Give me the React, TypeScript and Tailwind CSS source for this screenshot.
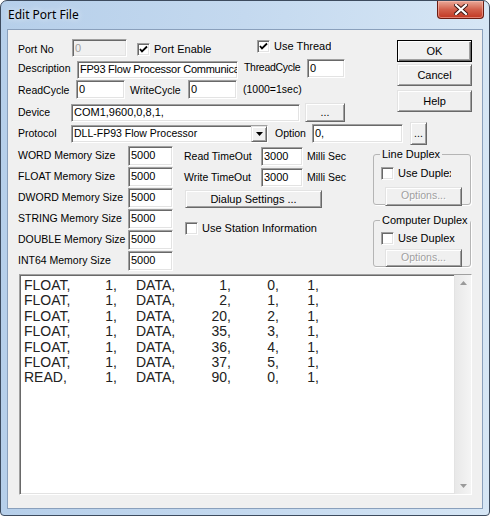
import React from 'react';

const ui = "font-['Liberation_Sans',Arial,sans-serif] text-[10.5px] text-black whitespace-nowrap";

const sunken =
  'border border-t-[#a0a0a0] border-l-[#a0a0a0] border-b-white border-r-white shadow-[inset_1px_1px_0_#696969,inset_-1px_-1px_0_#e3e3e3]';
const raised =
  'border border-t-[#e3e3e3] border-l-[#e3e3e3] border-b-[#696969] border-r-[#696969] shadow-[inset_1px_1px_0_#fff,inset_-1px_-1px_0_#a0a0a0] bg-[#f0f0f0]';

function Field({ className, children, disabled }: { className: string; children?: React.ReactNode; disabled?: boolean }) {
  return (
    <div
      className={`${sunken} ${className} flex items-center pl-[2px] overflow-hidden whitespace-nowrap text-[11px] ${
        disabled ? 'bg-[#f0f0f0] text-[#a0a0a0]' : 'bg-white'
      }`}
    >
      {children}
    </div>
  );
}

function Button({ className, children, disabled, def }: { className: string; children: React.ReactNode; disabled?: boolean; def?: boolean }) {
  const look = def
    ? 'border border-black shadow-[inset_1px_1px_0_#fff,inset_-1px_-1px_0_#696969,inset_-2px_-2px_0_#a0a0a0] bg-[#f0f0f0]'
    : raised;
  return (
    <div
      className={`${look} ${className} flex items-center justify-center whitespace-nowrap ${
        disabled ? 'text-[#a0a0a0] [text-shadow:1px_1px_0_#fff]' : ''
      }`}
    >
      {children}
    </div>
  );
}

function Check({ label, checked, className }: { label: string; checked?: boolean; className?: string }) {
  return (
    <div className={`flex items-center whitespace-nowrap overflow-hidden ${className ?? ''}`}>
      <div className={`${sunken} w-[13px] h-[13px] bg-white shrink-0 flex items-center justify-center`}>
        {checked && (
          <svg width="9" height="9" viewBox="0 0 9 9">
            <path d="M1 4 L3 6.5 L8 1.5" fill="none" stroke="#000" strokeWidth="1.8" />
          </svg>
        )}
      </div>
      <span className="ml-[4px] text-[11px]">{label}</span>
    </div>
  );
}

function Group({ title, className, children }: { title: string; className: string; children: React.ReactNode }) {
  return (
    <fieldset className={`border border-[#b5b5b5] rounded-[3px] shadow-[1px_1px_0_#fff] ${className}`}>
      <legend className="ml-[6px] px-[2px] leading-[13px] text-[11px]">{title}</legend>
      {children}
    </fieldset>
  );
}

const rows: [string, string, string, string, string, string][] = [
  ['FLOAT,', '1,', 'DATA,', '1,', '0,', '1,'],
  ['FLOAT,', '1,', 'DATA,', '2,', '1,', '1,'],
  ['FLOAT,', '1,', 'DATA,', '20,', '2,', '1,'],
  ['FLOAT,', '1,', 'DATA,', '35,', '3,', '1,'],
  ['FLOAT,', '1,', 'DATA,', '36,', '4,', '1,'],
  ['FLOAT,', '1,', 'DATA,', '37,', '5,', '1,'],
  ['READ,', '1,', 'DATA,', '90,', '0,', '1,'],
];

const memory = ['WORD', 'FLOAT', 'DWORD', 'STRING', 'DOUBLE', 'INT64'];

export default function App() {
  return (
    <div className="w-[490px] h-[516px] rounded-t-[7px] rounded-b-[4px] border border-[#3d4b5e] bg-gradient-to-r from-[#b6cfea] via-[#c4d9ef] to-[#d6e6f5] overflow-hidden">
      {/* Title bar */}
      <div className="h-[29px] flex items-start">
        <span className="pl-[7px] pt-[5px] font-['Noto_Sans',sans-serif] text-[12px] text-black [text-shadow:0_0_6px_#fff]">
          Edit Port File
        </span>
        <div className="ml-auto mr-[5px] w-[47px] h-[18px] rounded-b-[4px] border border-t-0 border-[#6b1c12] bg-gradient-to-b from-[#e9a898] via-[#d2604c] to-[#c1351f] shadow-[inset_0_0_0_1px_rgba(255,200,190,0.5)] flex items-center justify-center">
          <svg width="14" height="11" viewBox="0 0 14 11">
            <path d="M2 1 L12 10 M12 1 L2 10" stroke="#3a1410" strokeWidth="4" strokeLinecap="square" />
            <path d="M2 1 L12 10 M12 1 L2 10" stroke="#fff" strokeWidth="2.2" strokeLinecap="square" />
          </svg>
        </div>
      </div>

      {/* Client area */}
      <div className={`${ui} mx-[7px] w-[474px] h-[478px] bg-[#f0f0f0] shadow-[0_0_0_1px_#8aa0bc] pl-[10px]`}>
        {/* Top block */}
        <div className="flex">
          <div className="w-[379px]">
            <div className="mt-[8px] h-[20px] flex items-center">
              <span className="w-[54px] pt-[4px]">Port No</span>
              <Field className="w-[55px] h-[18px]" disabled>0</Field>
              <Check label="Port Enable" checked className="ml-[10px] w-[120px] pt-[2px]" />
              <Check label="Use Thread" checked className="mb-[4px]" />
            </div>
            <div className="h-[20px] flex items-center">
              <span className="w-[59px] pt-[2px]">Description</span>
              <Field className="w-[161px] h-[18px] mt-[3px] tracking-[-0.25px]">FP93 Flow Processor Communica</Field>
              <span className="ml-[6px] w-[63px] tracking-[-0.3px]">ThreadCycle</span>
              <Field className="w-[38px] h-[19px]">0</Field>
            </div>
            <div className="mt-[2px] h-[19px] flex items-center">
              <span className="w-[58px] pt-[2px]">ReadCycle</span>
              <Field className="w-[49px] h-[19px]">0</Field>
              <span className="ml-[5px] w-[58px] pt-[2px]">WriteCycle</span>
              <Field className="w-[49px] h-[19px]">0</Field>
              <span className="ml-[6px]">(1000=1sec)</span>
            </div>
            <div className="mt-[4px] h-[19px] flex items-center">
              <span className="w-[53px]">Device</span>
              <Field className="w-[229px] h-[18px]">COM1,9600,0,8,1,</Field>
              <Button className="ml-[5px] w-[40px] h-[19px]">...</Button>
            </div>
          </div>
          <div className="w-[75px]">
            <Button def className="mt-[10px] h-[22px] text-[11px]">OK</Button>
            <Button className="mt-[2px] h-[22px] text-[11px]">Cancel</Button>
            <Button className="mt-[4px] h-[22px] text-[11px]">Help</Button>
          </div>
        </div>

        {/* Protocol row */}
        <div className="h-[23px] flex items-center">
          <span className="w-[53px]">Protocol</span>
          <div className={`${sunken} bg-white w-[197px] h-[18px] flex items-center`}>
            <span className="flex-1 pl-[2px] whitespace-nowrap">DLL-FP93 Flow Processor</span>
            <div className={`${raised} w-[16px] h-[16px] flex items-center justify-center`}>
              <svg width="7" height="4" viewBox="0 0 7 4">
                <path d="M0 0 H7 L3.5 4 Z" fill="#000" />
              </svg>
            </div>
          </div>
          <span className="ml-[7px] w-[37px]">Option</span>
          <Field className="w-[91px] h-[19px]">0,</Field>
          <Button className="ml-[7px] w-[17px] h-[23px]">...</Button>
        </div>

        {/* Middle block */}
        <div className="h-[129px] flex">
          <div className="w-[155px]">
            {memory.map((m) => (
              <div key={m} className="h-[21px] flex items-center">
                <span className="w-[110px]">{m} Memory Size</span>
                <Field className="w-[45px] h-[20px]">5000</Field>
              </div>
            ))}
          </div>
          <div className="ml-[11px] w-[189px]">
            <div className="mt-[2px] h-[19px] flex items-center">
              <span className="w-[77px]">Read TimeOut</span>
              <Field className="w-[42px] h-[19px]">3000</Field>
              <span className="ml-[4px]">Milli Sec</span>
            </div>
            <div className="mt-[2px] h-[19px] flex items-center">
              <span className="w-[77px]">Write TimeOut</span>
              <Field className="w-[42px] h-[19px]">3000</Field>
              <span className="ml-[4px]">Milli Sec</span>
            </div>
            <Button className="ml-[1px] mt-[3px] w-[137px] h-[18px] text-[11px]">Dialup Settings ...</Button>
            <Check label="Use Station Information" className="ml-[1px] mt-[12px]" />
          </div>
          <div className="w-[98px]">
            <Group title="Line Duplex" className="mt-[3px] h-[57px]">
              <Check label="Use Duplex" className="ml-[7px] mt-[4px] w-[70px]" />
              <Button disabled className="ml-[11px] mt-[5px] w-[77px] h-[19px]">Options...</Button>
            </Group>
            <Group title="Computer Duplex" className="mt-[9px] h-[53px]">
              <Check label="Use Duplex" className="ml-[7px] mt-[3px]" />
              <Button disabled className="ml-[11px] mt-[2px] w-[77px] h-[18px]">Options...</Button>
            </Group>
          </div>
        </div>

        {/* Text area */}
        <div className={`${sunken} bg-white ml-[1px] w-[453px] h-[221px] flex`}>
          <div className="flex-1 pt-[3px] pl-[4px] font-['Liberation_Sans',Arial,sans-serif] text-[14px] leading-[15.4px] text-[#222]">
            {rows.map((r, i) => (
              <div key={i} className="flex whitespace-nowrap">
                <span className="w-[60px]">{r[0]}</span>
                <span className="w-[33px] text-right">{r[1]}</span>
                <span className="ml-[19px] w-[58px]">{r[2]}</span>
                <span className="w-[37px] text-right">{r[3]}</span>
                <span className="w-[48px] text-right">{r[4]}</span>
                <span className="w-[40px] text-right">{r[5]}</span>
              </div>
            ))}
          </div>
          <div className="w-[17px] bg-gradient-to-r from-[#e8e8e8] to-[#f4f4f4] border-l border-[#e3e3e3] flex flex-col justify-between items-center py-[6px]">
            <svg width="7" height="4" viewBox="0 0 7 4">
              <path d="M0 4 H7 L3.5 0 Z" fill="#9a9a9a" />
            </svg>
            <svg width="7" height="4" viewBox="0 0 7 4">
              <path d="M0 0 H7 L3.5 4 Z" fill="#9a9a9a" />
            </svg>
          </div>
        </div>
      </div>
    </div>
  );
}
